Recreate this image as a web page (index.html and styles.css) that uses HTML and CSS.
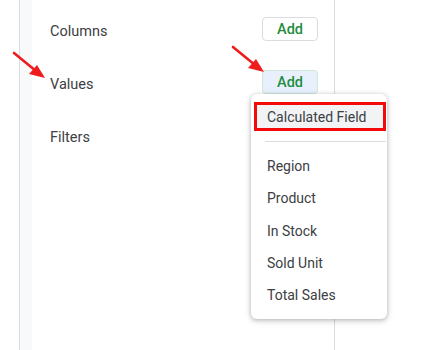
FILE: index.html
```html
<!DOCTYPE html>
<html>
<head>
<meta charset="utf-8">
<link rel="stylesheet" href="styles.css">
</head>
<body>
<div class="page">
  <div class="gutter"></div>
  <div class="band"></div>
  <div class="panel">
    <div class="row row-first">
      <span class="label">Columns</span>
      <button class="add">Add</button>
    </div>
    <div class="row">
      <span class="label">Values</span>
      <button class="add active">Add</button>
    </div>
    <div class="row">
      <span class="label">Filters</span>
      <button class="add">Add</button>
    </div>
  </div>
  <div class="rest"></div>

  <div class="menu">
    <div class="item highlighted">Calculated Field</div>
    <div class="sep"></div>
    <div class="item">Region</div>
    <div class="item">Product</div>
    <div class="item">In Stock</div>
    <div class="item">Sold Unit</div>
    <div class="item">Total Sales</div>
  </div>

  <svg class="arrow arrow-1" width="40" height="34" viewBox="0 0 40 34">
    <line x1="2" y1="2" x2="24" y2="20" stroke="#ee1c1c" stroke-width="2.6" stroke-linecap="round"/>
    <polygon points="33,27 17,23 25,14" fill="#ee1c1c"/>
  </svg>
  <svg class="arrow arrow-2" width="40" height="34" viewBox="0 0 40 34">
    <line x1="2" y1="2" x2="24" y2="20" stroke="#ee1c1c" stroke-width="2.6" stroke-linecap="round"/>
    <polygon points="33,27 17,23 25,14" fill="#ee1c1c"/>
  </svg>
</div>
</body>
</html>
```

FILE: styles.css
```css
* { box-sizing: border-box; }
html, body {
  margin: 0;
  padding: 0;
  background: #ffffff;
  font-family: Roboto, "Noto Sans", Arial, sans-serif;
}
.page {
  position: relative;
  width: 429px;
  height: 350px;
  display: flex;
  overflow: hidden;
}
.gutter {
  width: 20px;
  border-right: 1px solid #dadce0;
}
.band {
  width: 12px;
  background: #f8f9fa;
}
.panel {
  width: 303px;
  padding: 17px 16px 0 18px;
  border-right: 1px solid #dadce0;
  display: flex;
  flex-direction: column;
  gap: 29px;
}
.rest { flex: 1; }
.row {
  display: flex;
  align-items: center;
  justify-content: space-between;
  height: 24px;
}
.label {
  font-size: 14.5px;
  color: #3c4043;
  padding-top: 4px;
}
.add {
  width: 56px;
  height: 24px;
  border: 1px solid #dadce0;
  border-radius: 4px;
  background: #ffffff;
  color: #1e8e3e;
  font-family: Roboto, "Noto Sans", Arial, sans-serif;
  font-size: 14.5px;
  font-weight: 500;
  padding: 0;
}
.add.active {
  background: #e8f0fe;
  border-color: #cfe8d7;
}
.menu {
  position: absolute;
  left: 251px;
  top: 94px;
  width: 136px;
  height: 225px;
  background: #ffffff;
  border-radius: 6px;
  box-shadow: 0 1px 4px rgba(60, 64, 67, 0.3), 0 2px 6px 1px rgba(60, 64, 67, 0.12);
  padding: 8px 1px 0 3px;
}
.item {
  height: 32.3px;
  display: flex;
  align-items: center;
  padding-left: 13px;
  font-size: 14px;
  color: #3c4043;
}
.item.highlighted {
  height: 29px;
  border: 3px solid #f40a0a;
  background: #f1f3f4;
  padding-left: 10px;
}
.sep {
  height: 1px;
  background: #dadce0;
  margin: 10px 0 8px 11px;
}
.arrow {
  position: absolute;
}
.arrow-1 { left: 12px; top: 51px; }
.arrow-2 { left: 231px; top: 45px; }
```
